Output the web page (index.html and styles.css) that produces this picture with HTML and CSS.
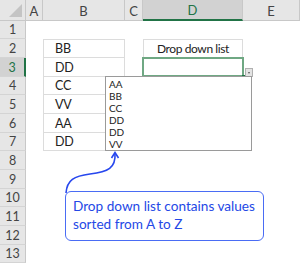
FILE: index.html
```html
<!DOCTYPE html>
<html>
<head>
<meta charset="utf-8">
<link rel="stylesheet" href="styles.css">
</head>
<body>
<div class="sheet">
  <div class="row head">
    <div class="corner"><span class="tri"></span></div>
    <div class="ch">A</div>
    <div class="ch">B</div>
    <div class="ch">C</div>
    <div class="ch sel">D</div>
    <div class="ch">E</div>
  </div>
  <div class="row h18"><div class="rh">1</div><div></div><div></div><div></div><div></div><div></div></div>
  <div class="row h19"><div class="rh">2</div><div></div><div class="bc first">BB</div><div></div><div class="dc">Drop down list</div><div></div></div>
  <div class="row h19"><div class="rh sel">3</div><div></div><div class="bc">DD</div><div></div><div class="dsel"><span class="btn"><span class="arr"></span></span><span class="handle"></span></div><div></div></div>
  <div class="row h18"><div class="rh">4</div><div></div><div class="bc">CC</div><div></div><div></div><div></div></div>
  <div class="row h19"><div class="rh">5</div><div></div><div class="bc">VV</div><div></div><div></div><div></div></div>
  <div class="row h19"><div class="rh">6</div><div></div><div class="bc">AA</div><div></div><div></div><div></div></div>
  <div class="row h18"><div class="rh">7</div><div></div><div class="bc">DD</div><div></div><div></div><div></div></div>
  <div class="row h19"><div class="rh">8</div><div></div><div></div><div></div><div></div><div></div></div>
  <div class="row h19"><div class="rh">9</div><div></div><div></div><div></div><div></div><div></div></div>
  <div class="row h18"><div class="rh">10</div><div></div><div></div><div></div><div></div><div></div></div>
  <div class="row h19"><div class="rh">11</div><div></div><div></div><div></div><div></div><div></div></div>
  <div class="row h19"><div class="rh">12</div><div></div><div></div><div></div><div></div><div></div></div>
  <div class="row h18"><div class="rh">13</div><div></div><div></div><div></div><div></div><div></div></div>

  <ul class="dropdown">
    <li>AA</li><li>BB</li><li>CC</li><li>DD</li><li>DD</li><li>VV</li>
  </ul>

  <svg class="arrow" width="300" height="263" viewBox="0 0 300 263">
    <path d="M66 193 C 67 180, 74 176, 90 174 C 108 172, 116 168, 115 153" fill="none" stroke="#2747ee" stroke-width="1.6"/>
    <path d="M111.5 158 L115 152.5 L118.5 158" fill="none" stroke="#2747ee" stroke-width="1.6" stroke-linejoin="miter"/>
  </svg>

  <div class="callout">Drop down list contains values<br>sorted from A to Z</div>
</div>
</body>
</html>
```

FILE: styles.css
```css
html, body {
  margin: 0;
  padding: 0;
  background: #ffffff;
}
body {
  font-family: Lato, "Open Sans", sans-serif;
  color: #222;
}
.sheet {
  position: relative;
  width: 300px;
  height: 263px;
  overflow: hidden;
}
.row {
  display: grid;
  grid-template-columns: 26px 17px 82px 18px 100px 57px;
}
.h18 { height: 18px; }
.h19 { height: 19px; }
.head {
  height: 21px;
  background: #e6e6e6;
}
.corner {
  position: relative;
  border-right: 1px solid #c8c8c8;
  border-bottom: 1px solid #c8c8c8;
  box-sizing: border-box;
}
.tri {
  position: absolute;
  right: 3px;
  bottom: 3px;
  width: 0;
  height: 0;
  border-left: 13px solid transparent;
  border-bottom: 13px solid #c4c4c4;
}
.ch {
  box-sizing: border-box;
  border-right: 1px solid #c8c8c8;
  border-bottom: 1px solid #c8c8c8;
  font-size: 13px;
  color: #444;
  display: flex;
  align-items: center;
  justify-content: center;
  padding-top: 1px;
}
.ch.sel {
  background: #d2d2d2;
  color: #217346;
  border-bottom: 2px solid #217346;
}
.rh {
  box-sizing: border-box;
  background: #e6e6e6;
  border-right: 1px solid #c8c8c8;
  border-bottom: 1px solid #d4d4d4;
  font-size: 12.5px;
  color: #444;
  display: flex;
  align-items: center;
  justify-content: center;
}
.rh.sel {
  background: #d2d2d2;
  color: #217346;
  border-right: 2px solid #217346;
}
.bc {
  box-sizing: border-box;
  border-left: 1px solid #dcdcdc;
  border-right: 1px solid #dcdcdc;
  border-bottom: 1px solid #dcdcdc;
  font-size: 12.5px;
  letter-spacing: -0.2px;
  color: #222;
  padding-left: 11px;
  display: flex;
  align-items: center;
}
.bc.first {
  border-top: 1px solid #dcdcdc;
}
.dc {
  box-sizing: border-box;
  border: 1px solid #dcdcdc;
  font-size: 12px;
  letter-spacing: -0.4px;
  color: #222;
  display: flex;
  align-items: center;
  justify-content: center;
}
.dsel {
  position: relative;
  box-sizing: border-box;
  margin: -1px -1px 0 -1px;
  height: 20px;
  border: 2px solid #6fa883;
}
.btn {
  position: absolute;
  right: -11px;
  bottom: -2px;
  width: 8px;
  height: 9px;
  background: #e3e3e3;
  border: 1px solid #b0b0b0;
  box-sizing: border-box;
}
.arr {
  position: absolute;
  left: 2px;
  top: 3px;
  width: 0;
  height: 0;
  border-left: 1.5px solid transparent;
  border-right: 1.5px solid transparent;
  border-top: 2px solid #555;
}
.handle {
  position: absolute;
  right: -3px;
  bottom: -3px;
  width: 3px;
  height: 3px;
  background: #217346;
}
.dropdown {
  position: absolute;
  left: 105px;
  top: 76px;
  width: 147px;
  height: 75px;
  box-sizing: border-box;
  margin: 0;
  padding: 1px 0 0 3px;
  list-style: none;
  background: #fff;
  border: 1px solid #9a9a9a;
  font-size: 10px;
  line-height: 12px;
  color: #222;
}
.arrow {
  position: absolute;
  left: 0;
  top: 0;
}
.callout {
  position: absolute;
  left: 65px;
  top: 191px;
  width: 199px;
  height: 50px;
  box-sizing: border-box;
  border: 1.5px solid #4a6cf4;
  border-radius: 6px;
  background: #fff;
  padding: 5px 0 0 7px;
  font-size: 13.6px;
  line-height: 18px;
  color: #2448e6;
}
```
